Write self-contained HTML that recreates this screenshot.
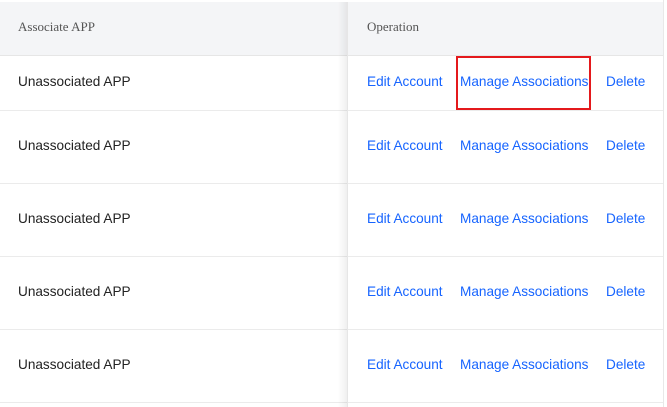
<!DOCTYPE html>
<html><head><style>
body{margin:0;width:667px;height:407px;background:#fff;position:relative;overflow:hidden;font-family:"Liberation Sans",sans-serif}
.hdr{position:absolute;left:0;top:2px;width:663px;height:53px;background:#f4f5f7;border-bottom:1px solid #e6e6e6}
.h{position:absolute;top:19px;font-family:"Liberation Serif",serif;font-size:13px;color:#555}
.line{position:absolute;left:0;width:663px;height:1px;background:#ebebeb}
.t{position:absolute;font-size:13.6px;color:#222;left:18px}
.a{position:absolute;font-size:13.6px;color:#1664ff}
.vr{position:absolute;left:663px;top:0;width:1px;height:407px;background:#e8e8e8}
.sh{position:absolute;left:338px;top:2px;width:10px;height:405px;background:linear-gradient(to right,rgba(0,0,0,0),rgba(0,0,0,0.07))}
.vd{position:absolute;left:347px;top:2px;width:1px;height:405px;background:#e6e6e6}
.box{position:absolute;left:456px;top:56px;width:131px;height:50px;border:2px solid #e4191c}
</style></head><body>
<div class="hdr"></div>
<div class="h" style="left:18px">Associate APP</div>
<div class="h" style="left:367px">Operation</div>
<div class="line" style="top:110px"></div>
<div class="line" style="top:183px"></div>
<div class="line" style="top:256px"></div>
<div class="line" style="top:329px"></div>
<div class="line" style="top:402px"></div>
<div class="sh"></div><div class="vd"></div><div class="vr"></div>
<div class="t" style="top:74px">Unassociated APP</div>
<div class="a" style="left:367px;top:74px">Edit Account</div>
<div class="a" style="left:460px;top:74px">Manage Associations</div>
<div class="a" style="left:606px;top:74px">Delete</div>
<div class="t" style="top:138px">Unassociated APP</div>
<div class="a" style="left:367px;top:138px">Edit Account</div>
<div class="a" style="left:460px;top:138px">Manage Associations</div>
<div class="a" style="left:606px;top:138px">Delete</div>
<div class="t" style="top:211px">Unassociated APP</div>
<div class="a" style="left:367px;top:211px">Edit Account</div>
<div class="a" style="left:460px;top:211px">Manage Associations</div>
<div class="a" style="left:606px;top:211px">Delete</div>
<div class="t" style="top:284px">Unassociated APP</div>
<div class="a" style="left:367px;top:284px">Edit Account</div>
<div class="a" style="left:460px;top:284px">Manage Associations</div>
<div class="a" style="left:606px;top:284px">Delete</div>
<div class="t" style="top:357px">Unassociated APP</div>
<div class="a" style="left:367px;top:357px">Edit Account</div>
<div class="a" style="left:460px;top:357px">Manage Associations</div>
<div class="a" style="left:606px;top:357px">Delete</div>
<div class="box"></div>
</body></html>
